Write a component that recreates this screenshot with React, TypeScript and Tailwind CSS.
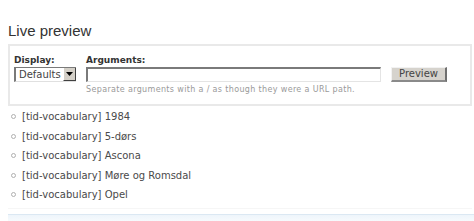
import React from "react";

const items = ["1984", "5-dørs", "Ascona", "Møre og Romsdal", "Opel"];

export default function App() {
  return (
    <div className="w-[474px] h-[221px] bg-white overflow-hidden flex flex-col font-['DejaVu_Sans',sans-serif]">
      <h2 className="pl-2 pt-[22px] text-[15px] leading-[18px] font-normal text-[#333] font-['Liberation_Sans',sans-serif]">
        Live preview
      </h2>
      <div className="ml-2 mr-[2px] mt-[4px] h-[62px] border-2 border-[#e9e9e9] pl-[4px] pt-[9px] flex gap-[10px]">
        <div className="flex flex-col w-[62px]">
          <div className="text-[9px] leading-[11px] font-bold text-[#333]">Display:</div>
          <div className="mt-[1px] h-[15px] w-[62px] flex border-l-2 border-t border-[#7a7a7a] border-b border-b-[#e0e0e0] bg-white">
            <div className="flex-1 text-[10px] leading-[13px] text-[#444] pl-[3px]">Defaults</div>
            <div className="w-[13px] h-[13px] bg-[#d4d0c8] border-r border-b border-[#404040] border-l border-l-white flex items-center justify-center">
              <svg width="7" height="4" viewBox="0 0 7 4">
                <path d="M0 0H7L3.5 4Z" fill="#000" />
              </svg>
            </div>
          </div>
        </div>
        <div className="flex flex-col">
          <div className="text-[9px] leading-[11px] font-bold text-[#333]">Arguments:</div>
          <div className="mt-[1px] flex gap-[10px]">
            <div className="w-[295px] h-[15px] border-t-2 border-l-2 border-[#7a7a7a] border-b border-r border-b-[#e4e4e4] border-r-[#e4e4e4] bg-white" />
            <div className="w-[56px] h-[15px] bg-[#d6d3cd] border-t border-l border-[#f2f2f2] border-r-2 border-b-2 border-r-[#6f6f6f] border-b-[#8a8a8a] flex items-center justify-center text-[10px] leading-[12px] text-[#444]">
              Preview
            </div>
          </div>
          <div className="mt-[3px] text-[8px] leading-[10px] text-[#9a9a9a] tracking-[0.35px]">
            Separate arguments with a / as though they were a URL path.
          </div>
        </div>
      </div>
      <ul className="mt-[1px] ml-2 mr-[2px] border-b border-[#f6f6f6] h-[102px]">
        {items.map((t) => (
          <li key={t} className="h-[19.5px] flex items-center text-[10px] text-[#4a4a4a]">
            <span className="ml-[3px] mr-[6px] w-[5px] h-[5px] rounded-full border border-[#b0b0b0]" />
            [tid-vocabulary] {t}
          </li>
        ))}
      </ul>
      <div className="mt-[5px] ml-2 flex-1 border-t border-[#dbe8f3] bg-gradient-to-b from-[#eef5fb] to-[#f6fafd]" />
    </div>
  );
}
